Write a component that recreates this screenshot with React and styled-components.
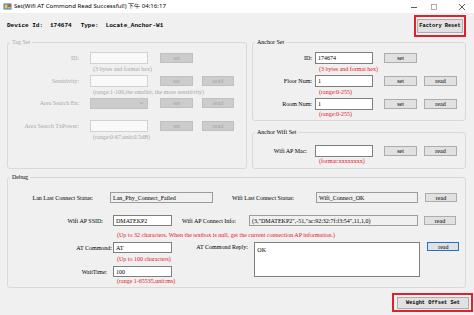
import React from 'react';
import styled, { createGlobalStyle, css } from 'styled-components';

const GlobalStyle = createGlobalStyle`
  html, body {
    margin: 0;
    padding: 0;
    background: #f0f0f0;
  }
  body {
    font-family: "Liberation Serif", "Times New Roman", serif;
  }
`;

const boxVariants = {
  normal: css`
    background: #fff;
    border: 1px solid #7f7f7f;
  `,
  readonly: css`
    background: #f0f0f0;
    border: 1px solid #9c9c9c;
  `,
  disabled: css`
    background: #f9f9f9;
    border: 1px solid #d2d2d2;
  `,
};

function TitleIcon() {
  return (
    <svg width='9' height='9' viewBox='0 0 9 9'>
      <rect x='0.5' y='1.5' width='8' height='6' fill='#3a78c8' />
      <rect x='1.5' y='2.5' width='3' height='4' fill='#f6c443' />
      <rect x='5' y='2.5' width='3' height='2' fill='#e8513a' />
      <rect x='5' y='5' width='3' height='1.5' fill='#9fd25a' />
    </svg>
  );
}

function WinControl({ kind }) {
  return (
    <Ctrl $ml={kind === 'close' ? 8 : 0}>
      <svg width='8' height='8' viewBox='0 0 8 8' stroke='#333' strokeWidth='0.8' fill='none'>
        {kind === 'min' && <line x1='1' y1='4.5' x2='7' y2='4.5' />}
        {kind === 'max' && <rect x='1.5' y='1.5' width='5' height='5' stroke='#999' />}
        {kind === 'close' && (
          <>
            <line x1='1' y1='1' x2='7' y2='7' />
            <line x1='7' y1='1' x2='1' y2='7' />
          </>
        )}
      </svg>
    </Ctrl>
  );
}

function Chevron() {
  return (
    <svg width='5' height='4' viewBox='0 0 5 4'>
      <polyline points='0.5,1 2.5,3 4.5,1' fill='none' stroke='#a0a0a0' strokeWidth='0.7' />
    </svg>
  );
}

function App() {
  return (
    <>
      <GlobalStyle />
      <Window>
        <TitleBar>
          <TitleIcon />
          <TitleText>Set(Wifi AT Commond Read Successful!) 下午 04:16:17</TitleText>
          <Controls>
            <WinControl kind='min' />
            <WinControl kind='max' />
            <WinControl kind='close' />
          </Controls>
        </TitleBar>

        <Content>
          <Header>
            <DeviceInfo>
              <span>Device Id:</span>
              <InfoValue $ml={7}>174674</InfoValue>
              <InfoValue $ml={9}>Type:</InfoValue>
              <InfoValue $ml={7}>Locate_Anchor-W1</InfoValue>
            </DeviceInfo>
            <Highlight $pad='2px 1px'>
              <BigButton $w={46} $h={14}>Factory Reset</BigButton>
            </Highlight>
          </Header>

          <TopRow>
            <Group $w={240} $pb={0}>
              <Legend $disabled>Tag Set</Legend>
              <Row $mt={6}>
                <Label $w={71} $disabled>ID:</Label>
                <TextBox $ml={11} $w={58} $variant='disabled' />
                <Button $ml={12} $w={33} disabled>set</Button>
              </Row>
              <Hint $pl={85} $disabled>(3 bytes and format hex)</Hint>
              <Row $mt={1}>
                <Label $w={71} $disabled>Sensitivity:</Label>
                <TextBox $ml={11} $w={58} $variant='disabled' />
                <Button $ml={12} $w={33} disabled>set</Button>
                <Button $ml={9} $w={32} disabled>read</Button>
              </Row>
              <Hint $pl={85} $disabled>(range:1-100,the smaller, the more sensitivity)</Hint>
              <Row>
                <Label $w={71} $disabled>Area Search En:</Label>
                <Combo $ml={11} $w={58}>
                  <Chevron />
                </Combo>
                <Button $ml={12} $w={33} disabled>set</Button>
                <Button $ml={9} $w={32} disabled>read</Button>
              </Row>
              <Row $mt={11}>
                <Label $w={71} $disabled>Area Search TxPower:</Label>
                <TextBox $ml={11} $w={58} $variant='disabled' />
                <Button $ml={12} $w={33} disabled>set</Button>
                <Button $ml={9} $w={32} disabled>read</Button>
              </Row>
              <Hint $pl={85} $disabled>(range:0-67,unit:0.5dB)</Hint>
            </Group>

            <RightColumn>
              <Group $pb={2}>
                <Legend>Anchor Set</Legend>
                <Row $mt={6}>
                  <Label $w={59}>ID:</Label>
                  <TextBox $ml={3} $w={58}>174674</TextBox>
                  <Button $ml={11} $w={33}>set</Button>
                </Row>
                <Hint $pl={66}>(3 bytes and format hex)</Hint>
                <Row $mt={1}>
                  <Label $w={59}>Floor Num:</Label>
                  <TextBox $ml={3} $w={58}>1</TextBox>
                  <Button $ml={11} $w={33}>set</Button>
                  <Button $ml={7} $w={33}>read</Button>
                </Row>
                <Hint $pl={66}>(range:0-255)</Hint>
                <Row $mt={1}>
                  <Label $w={59}>Room Num:</Label>
                  <TextBox $ml={3} $w={58}>1</TextBox>
                  <Button $ml={11} $w={33}>set</Button>
                  <Button $ml={7} $w={33}>read</Button>
                </Row>
                <Hint $pl={66} $h={8}>(range:0-255)</Hint>
              </Group>

              <Group $pb={3}>
                <Legend>Anchor Wifi Set</Legend>
                <Row $mt={9}>
                  <Label $w={54}>Wifi AP Mac:</Label>
                  <TextBox $ml={8} $w={58} />
                  <Button $ml={11} $w={33}>set</Button>
                  <Button $ml={7} $w={33}>read</Button>
                </Row>
                <Hint $pl={66} $h={8}>(format:xxxxxxxx)</Hint>
              </Group>
            </RightColumn>
          </TopRow>

          <DebugGroup $pb={2}>
            <Legend>Debug</Legend>
            <Row $mt={11} $h={11}>
              <Label $w={85}>Lan Last Connect Status:</Label>
              <TextBox $ml={17} $w={103} $h={11} $variant='readonly'>Lan_Phy_Connect_Failed</TextBox>
              <Label $ml={19} $w={84} $align='left'>Wifi Last Connect Status:</Label>
              <TextBox $w={102} $h={11} $variant='readonly'>Wifi_Connect_OK</TextBox>
              <Button $ml={7} $w={32} $h={9}>read</Button>
            </Row>
            <Row $mt={12} $h={11}>
              <Label $w={95}>Wifi AP SSID:</Label>
              <TextBox $ml={10} $w={59} $h={11}>DMATEKP2</TextBox>
              <Label $ml={10} $w={57} $align='left'>Wifi AP Connect Info:</Label>
              <TextBox $ml={10} $w={169} $h={11} $variant='readonly'>
                (3,"DMATEKP2",-51,"ac:92:32:7f:f3:54",11,1,0)
              </TextBox>
              <Button $ml={6} $w={32} $h={9}>read</Button>
            </Row>
            <Hint $pl={109} $mt={4}>
              (Up to 32 characters. When the textbox is null, get the current connection AP information.)
            </Hint>

            <CommandArea>
              <CommandColumn>
                <Row $h={11}>
                  <Label $w={104}>AT Commond:</Label>
                  <TextBox $ml={1} $w={59} $h={11}>AT</TextBox>
                </Row>
                <Hint $pl={109} $h={12}>(Up to 100 characters)</Hint>
                <Row $mt={1} $h={11}>
                  <Label $w={99}>WaitTime:</Label>
                  <TextBox $ml={6} $w={59} $h={11}>100</TextBox>
                </Row>
                <Hint $pl={109} $h={8}>(range 1-65535,unit:ms)</Hint>
              </CommandColumn>

              <Row $top $h={35}>
                <Label $ml={21} $w={58} $align='left' $pt={2}>AT Commond Reply:</Label>
                <TextBox $w={166} $h={35} $multi>OK</TextBox>
                <Button $ml={7} $w={32} $h={9} $focus>read</Button>
              </Row>
            </CommandArea>
          </DebugGroup>

          <Footer>
            <Highlight $pad='2px 2px 1px 3px'>
              <BigButton $w={72} $h={12}>Weight Offset Set</BigButton>
            </Highlight>
          </Footer>
        </Content>
      </Window>
    </>
  );
}

const Window = styled.div`
  width: 474px;
  height: 315px;
  overflow: hidden;
  background: #f0f0f0;
  color: #000;
  font-size: 6px;
  line-height: 1;
`;

const TitleBar = styled.div`
  display: flex;
  align-items: center;
  height: 13px;
  padding: 0 2px 0 3px;
  background: #fff;
  font-family: "Noto Sans", "Liberation Sans", sans-serif;
  font-size: 6.1px;
`;

const TitleText = styled.span`
  flex: 1;
  margin-left: 2px;
  white-space: nowrap;
`;

const Controls = styled.div`
  display: flex;
  align-items: center;
`;

const Ctrl = styled.span`
  display: flex;
  justify-content: center;
  width: 20px;
  margin-left: ${(p) => p.$ml}px;
`;

const Content = styled.div`
  padding: 0 8px 0 7px;
`;

const Header = styled.div`
  display: flex;
  align-items: center;
  justify-content: space-between;
  height: 22px;
  margin-top: 2px;
`;

const DeviceInfo = styled.div`
  display: flex;
  font-family: "Liberation Mono", "Courier New", monospace;
  font-weight: bold;
  font-size: 6px;
  white-space: nowrap;
`;

const InfoValue = styled.span`
  margin-left: ${(p) => p.$ml}px;
`;

const Highlight = styled.div`
  display: flex;
  padding: ${(p) => p.$pad};
  border: 2px solid #e0202a;
`;

const BigButton = styled.button`
  box-sizing: border-box;
  width: ${(p) => p.$w}px;
  height: ${(p) => p.$h}px;
  padding: 0;
  background: #e1e1e1;
  border: 1px solid #adadad;
  font-family: "Liberation Mono", "Courier New", monospace;
  font-weight: bold;
  font-size: 5.3px;
  color: #000;
  white-space: nowrap;
`;

const TopRow = styled.div`
  display: flex;
  align-items: stretch;
  gap: 5px;
  margin-top: 1px;
`;

const RightColumn = styled.div`
  display: flex;
  flex-direction: column;
  gap: 7px;
  flex: 1;
`;

const Group = styled.fieldset`
  box-sizing: border-box;
  ${(p) => p.$w && `width: ${p.$w}px;`}
  min-width: 0;
  margin: 0;
  padding: 0 0 ${(p) => p.$pb}px 0;
  border: 1px solid #d9d9d9;
  border-radius: 3px;
`;

const DebugGroup = styled(Group)`
  margin-top: 4px;
`;

const Legend = styled.legend`
  height: 8px;
  margin-left: 2px;
  padding: 0 2px;
  line-height: 8px;
  font-size: 6px;
  color: ${(p) => (p.$disabled ? '#a8a8a8' : '#000')};
`;

const Row = styled.div`
  display: flex;
  align-items: ${(p) => (p.$top ? 'flex-start' : 'center')};
  height: ${(p) => p.$h ?? 12}px;
  margin-top: ${(p) => p.$mt ?? 0}px;
`;

const Label = styled.span`
  flex: none;
  width: ${(p) => p.$w}px;
  margin-left: ${(p) => p.$ml ?? 0}px;
  padding-top: ${(p) => p.$pt ?? 0}px;
  text-align: ${(p) => p.$align ?? 'right'};
  white-space: nowrap;
  color: ${(p) => (p.$disabled ? '#a8a8a8' : '#000')};
`;

const Hint = styled.div`
  height: ${(p) => p.$h ?? 10}px;
  margin-top: ${(p) => p.$mt ?? 0}px;
  padding-left: ${(p) => p.$pl}px;
  line-height: ${(p) => p.$h ?? 10}px;
  white-space: nowrap;
  color: ${(p) => (p.$disabled ? '#a8a8a8' : '#e3151f')};
`;

const TextBox = styled.div`
  flex: none;
  box-sizing: border-box;
  display: flex;
  align-items: ${(p) => (p.$multi ? 'flex-start' : 'center')};
  width: ${(p) => p.$w}px;
  height: ${(p) => p.$h ?? 12}px;
  margin-left: ${(p) => p.$ml ?? 0}px;
  padding: ${(p) => (p.$multi ? '4px 2px' : '0 2px')};
  overflow: hidden;
  white-space: nowrap;
  ${(p) => boxVariants[p.$variant || 'normal']}
`;

const Combo = styled.div`
  flex: none;
  box-sizing: border-box;
  display: flex;
  align-items: center;
  justify-content: flex-end;
  width: ${(p) => p.$w}px;
  height: 11px;
  margin-left: ${(p) => p.$ml}px;
  padding-right: 3px;
  background: #cccccc;
  border: 1px solid #c2c2c2;
`;

const Button = styled.button`
  flex: none;
  box-sizing: border-box;
  width: ${(p) => p.$w}px;
  height: ${(p) => p.$h ?? 10}px;
  margin-left: ${(p) => p.$ml ?? 0}px;
  padding: 0;
  background: #e1e1e1;
  border: 1px solid ${(p) => (p.$focus ? '#1a73d0' : '#adadad')};
  font-family: inherit;
  font-size: 6px;
  color: #000;

  &:disabled {
    background: #cccccc;
    border-color: #c0c0c0;
    color: #a3a3a3;
  }
`;

const CommandArea = styled.div`
  display: flex;
  margin-top: 2px;
`;

const CommandColumn = styled.div`
  display: flex;
  flex-direction: column;
`;

const Footer = styled.div`
  display: flex;
  justify-content: flex-end;
  margin: 5px -7px 0 0;
`;

export default App;
